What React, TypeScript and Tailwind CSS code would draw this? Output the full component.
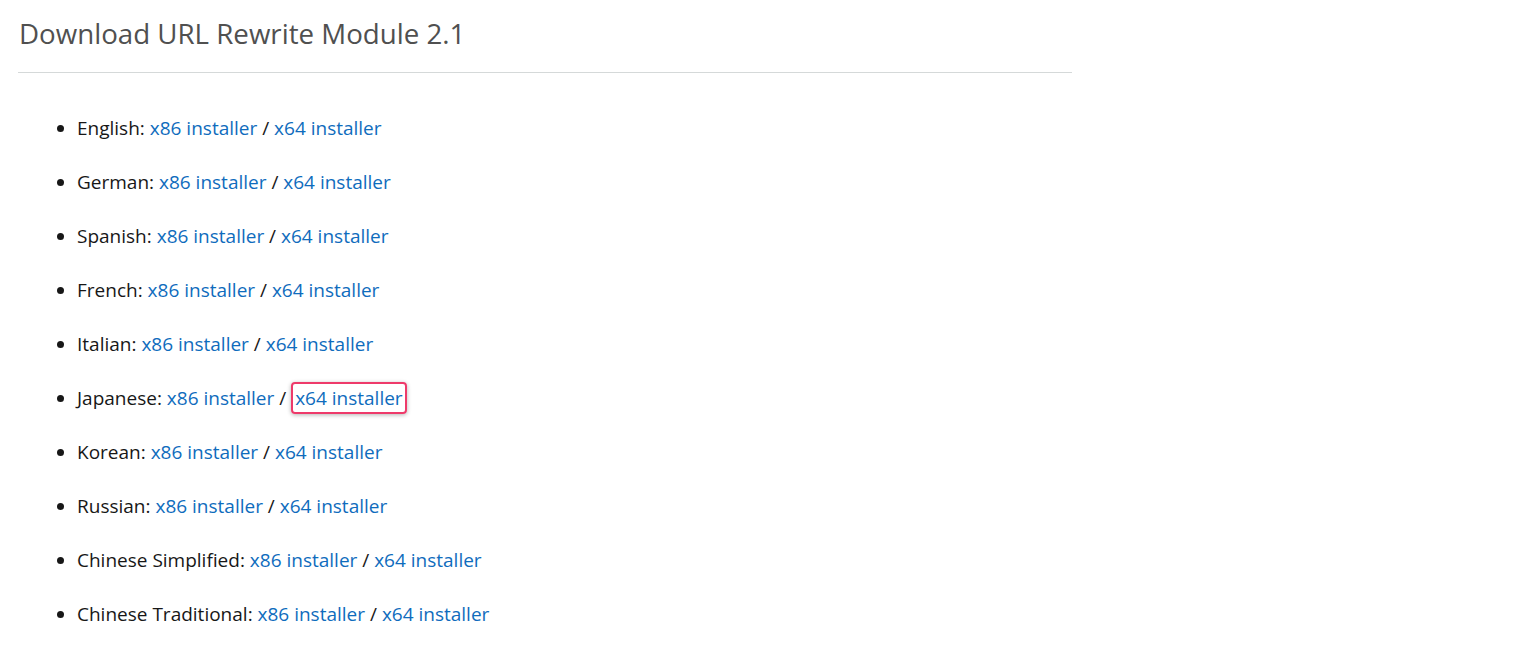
const languages = [
  "English",
  "German",
  "Spanish",
  "French",
  "Italian",
  "Japanese",
  "Korean",
  "Russian",
  "Chinese Simplified",
  "Chinese Traditional",
];

export default function App() {
  return (
    <div className="min-h-screen bg-white font-['Open_Sans',sans-serif] text-[#171717]">
      <div className="w-[1054px] ml-[18px]">
        <h2 className="pt-[15px] pb-[21px] pl-[1px] text-[27.7px] leading-[36px] font-normal text-[#505050] border-b border-[#d5d9d9]">
          Download URL Rewrite Module 2.1
        </h2>
        <ul className="list-disc pl-[59px] mt-[43px] text-[19px] leading-[24px] flex flex-col gap-[30px]">
          {languages.map((lang) => (
            <li key={lang}>
              {lang}:{" "}
              <a href="#" className="text-[#0f6cbd]">
                x86 installer
              </a>{" "}
              /{" "}
              {lang === "Japanese" ? (
                <a
                  href="#"
                  className="text-[#0f6cbd] border-2 border-[#ee3a6a] rounded-[4px] px-[2px] py-[1px] shadow-[0_1px_4px_rgba(0,0,0,0.3)]"
                >
                  x64 installer
                </a>
              ) : (
                <a href="#" className="text-[#0f6cbd]">
                  x64 installer
                </a>
              )}
            </li>
          ))}
        </ul>
      </div>
    </div>
  );
}
